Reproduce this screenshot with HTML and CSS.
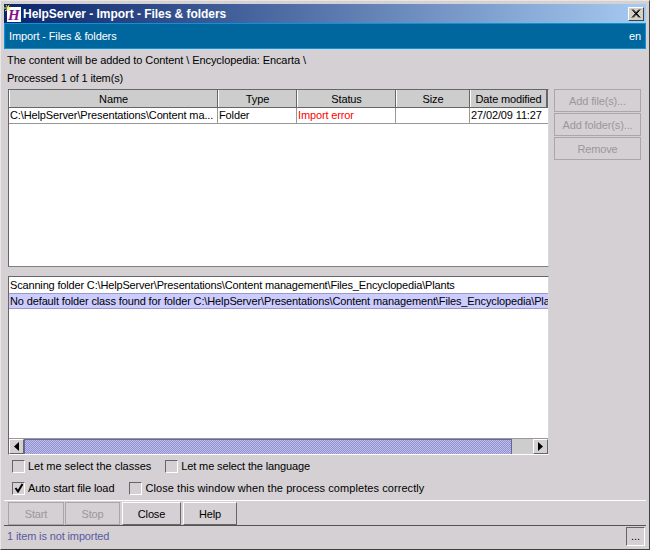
FILE: index.html
```html
<!DOCTYPE html>
<html lang="en">
<head>
<meta charset="utf-8">
<title>HelpServer - Import - Files &amp; folders</title>
<link rel="stylesheet" href="styles.css">
</head>
<body>
<div class="window">
  <div class="titlebar">
    <svg class="app-icon" width="17" height="17" viewBox="0 0 17 17">
      <rect x="3" y="2" width="14" height="15" fill="#fff"/>
      <path d="M2 0l2 3M5 0L4 3M7 2L4 4M0 3h4M1 6l3-2" stroke="#f4ec30" stroke-width="1" fill="none"/>
      <text class="app-letter" x="4" y="15">H</text>
    </svg>
    <span class="title-text">HelpServer - Import - Files &amp; folders</span>
    <span class="close-x">
      <svg width="10" height="9" viewBox="0 0 10 9"><path d="M1 0.5l7 8M2.2 0.5l7 8M8 0.5l-7 8M9.2 0.5l-7 8" stroke="#000" stroke-width="1" fill="none"/></svg>
    </span>
  </div>
  <div class="banner"><span>Import - Files &amp; folders</span><span>en</span></div>
  <div class="content">
    <div class="info first">The content will be added to Content \ Encyclopedia: Encarta \</div>
    <div class="info second">Processed 1 of 1 item(s)</div>
    <div class="upper">
      <div class="table">
        <div class="thead">
          <div class="th c1">Name</div>
          <div class="th c2">Type</div>
          <div class="th c3">Status</div>
          <div class="th c4">Size</div>
          <div class="th c5">Date modified</div>
        </div>
        <div class="tr">
          <div class="td c1">C:\HelpServer\Presentations\Content ma...</div>
          <div class="td c2">Folder</div>
          <div class="td c3 error">Import error</div>
          <div class="td c4"></div>
          <div class="td c5">27/02/09 11:27</div>
        </div>
      </div>
      <div class="side">
        <div class="btn disabled side-btn">Add file(s)...</div>
        <div class="btn disabled side-btn">Add folder(s)...</div>
        <div class="btn disabled side-btn">Remove</div>
      </div>
    </div>
    <div class="log">
      <div class="log-body">
        <div class="log-line plain">Scanning folder C:\HelpServer\Presentations\Content management\Files_Encyclopedia\Plants</div>
        <div class="log-line selected">No default folder class found for folder C:\HelpServer\Presentations\Content management\Files_Encyclopedia\Plants</div>
      </div>
      <div class="scrollbar">
        <div class="arrow"><svg width="5" height="9" viewBox="0 0 5 9"><path d="M5 0v9L0 4.5z" fill="#000"/></svg></div>
        <div class="thumb"></div>
        <div class="track"></div>
        <div class="arrow"><svg width="5" height="9" viewBox="0 0 5 9"><path d="M0 0v9l5-4.5z" fill="#000"/></svg></div>
      </div>
    </div>
    <div class="check-row row-a">
      <span class="check wide-a"><span class="box"></span>Let me select the classes</span>
      <span class="check"><span class="box"></span>Let me select the language</span>
    </div>
    <div class="check-row row-b">
      <span class="check wide-b"><span class="box"><svg width="10" height="10" viewBox="0 0 10 10"><path d="M1.5 5l2.5 3.5L8.5 1" stroke="#000" stroke-width="2" fill="none"/></svg></span>Auto start file load</span>
      <span class="check wide-c"><span class="box"></span>Close this window when the process completes correctly</span>
    </div>
  </div>
  <div class="actions">
    <div class="btn disabled a-start">Start</div>
    <div class="btn disabled a-stop">Stop</div>
    <div class="btn a-close">Close</div>
    <div class="btn a-help">Help</div>
  </div>
  <div class="status">
    <span class="status-text">1 item is not imported</span>
    <div class="btn more">...</div>
  </div>
</div>
</body>
</html>
```
FILE: styles.css
```css
* { box-sizing: border-box; }
html, body { margin: 0; padding: 0; }
body {
  width: 650px;
  height: 550px;
  overflow: hidden;
  font-family: "Liberation Sans", Arial, sans-serif;
  font-size: 11px;
  letter-spacing: -0.13px;
  color: #000;
  background: #d4d0d3;
}
.window {
  width: 650px;
  height: 550px;
  display: flex;
  flex-direction: column;
  border: 1px solid;
  border-color: #e8e6e0 #404040 #404040 #e8e6e0;
  padding: 3px;
  background: #d4d0d3;
}
.titlebar {
  height: 19px;
  display: flex;
  align-items: center;
  background: linear-gradient(to right, #0a246a, #a6caf0);
  color: #fff;
  flex: none;
}
.app-icon { margin: 0 2px 0 0; flex: none; }
.app-letter {
  font-family: "Liberation Serif", serif;
  font-weight: 700;
  font-style: italic;
  font-size: 15px;
  fill: #8a1090;
}
.title-text { font-weight: 700; font-size: 12px; letter-spacing: -0.04px; flex: 1; }
.close-x {
  width: 16px;
  height: 14px;
  margin-right: 2px;
  display: flex;
  align-items: center;
  justify-content: center;
  background: #d4d0c8;
  border: 1px solid;
  border-color: #fff #404040 #404040 #fff;
}
.banner {
  height: 26px;
  flex: none;
  display: flex;
  justify-content: space-between;
  align-items: center;
  padding: 0 4px;
  background: #00669e;
  border: 1px solid #0a94dc;
  color: #fff;
}
.content { flex: none; padding-left: 4px; }
.info { height: 13px; line-height: 13px; white-space: nowrap; margin-left: -1px; }
.first { margin-top: 5px; letter-spacing: -0.08px; }
.second { margin-top: 5px; }
.upper { display: flex; margin-top: 4px; }
.table {
  width: 541px;
  height: 178px;
  background: #fff;
  border: 1px solid;
  border-color: #666 #d8d8d8 #808080 #666;
  flex: none;
}
.thead { display: flex; height: 18px; background: #cdcdcd; border-bottom: 1px solid #666; }
.tr { display: flex; height: 16px; border-bottom: 1px solid #999; }
.th, .td { flex: none; border-right: 1px solid #999; white-space: nowrap; overflow: hidden; }
.th { text-align: center; line-height: 18px; border-right-color: #666; border-left: 1px solid #fff; }
.td { line-height: 15px; padding-left: 1px; }
.c1 { width: 209px; }
.c2 { width: 79px; }
.c3 { width: 99px; }
.c4 { width: 74px; }
.c5 { width: 78px; border-right: 0; }
.th.c5 { border-right: 2px solid #666; }
.error { color: #f00; }
.side { display: flex; flex-direction: column; gap: 1px; margin-left: 5px; }
.btn {
  display: flex;
  align-items: center;
  justify-content: center;
  background: #d4d0d3;
  border: 1px solid;
  border-color: #fff #666 #666 #fff;
}
.btn.disabled { color: #9a989a; border-color: #a8a8a8; }
.side-btn { width: 87px; height: 23px; }
.log {
  width: 541px;
  height: 179px;
  margin-top: 9px;
  display: flex;
  flex-direction: column;
  background: #fff;
  border: 1px solid;
  border-color: #666 #d8d8d8 #fff #666;
}
.log-body { flex: 1; overflow: hidden; }
.log-line { height: 16px; line-height: 15px; padding-left: 1px; white-space: nowrap; overflow: hidden; letter-spacing: -0.165px; }
.plain { line-height: 17px; }
.selected { background: #ccccff; border: 1px solid #9999cc; border-width: 1px 0; line-height: 14px; letter-spacing: -0.13px; }
.scrollbar { height: 16px; display: flex; flex: none; background: #cdcdcd; border-top: 1px solid #999; }
.arrow {
  width: 15px;
  flex: none;
  display: flex;
  align-items: center;
  justify-content: center;
  background: #d4d0d3;
  border: 1px solid;
  border-color: #fff #666 #666 #fff;
}
.thumb {
  width: 488px;
  flex: none;
  background: repeating-conic-gradient(#c0c0ee 0 25%, #9090cc 0 50%) 0 0 / 2px 2px;
  border: 1px solid #66669a;
  border-width: 1px 1px 0 1px;
}
.track { flex: 1; }
.check-row { display: flex; height: 14px; align-items: center; white-space: nowrap; padding-left: 4px; }
.row-a { margin-top: 4px; gap: 14px; }
.row-b { margin-top: 8px; gap: 15px; }
.check { display: flex; align-items: center; gap: 3px; }
.wide-a { letter-spacing: -0.01px; }
.wide-b { letter-spacing: -0.08px; }
.wide-c { letter-spacing: 0.07px; }
.box {
  width: 13px;
  height: 13px;
  flex: none;
  display: flex;
  align-items: center;
  justify-content: center;
  background: #d4d0d3;
  border: 1px solid;
  border-color: #666 #fff #fff #666;
}
.actions {
  flex: none;
  height: 26px;
  margin-top: 5px;
  display: flex;
  gap: 1px;
  padding: 1px 0 0 4px;
  border-top: 1px solid #fff;
  border-bottom: 1px solid #555;
}
.actions .btn { height: 23px; }
.a-start { width: 56px; }
.a-stop { width: 55px; }
.a-close { width: 59px; margin-left: 1px; }
.a-help { width: 54px; margin-left: 1px; }
.status { flex: 1; display: flex; justify-content: space-between; align-items: center; padding-left: 3px; }
.status-text { color: #5a5aa0; }
.more { width: 19px; height: 19px; border-color: #666 #fff #fff #666; margin-right: 1px; }
```
